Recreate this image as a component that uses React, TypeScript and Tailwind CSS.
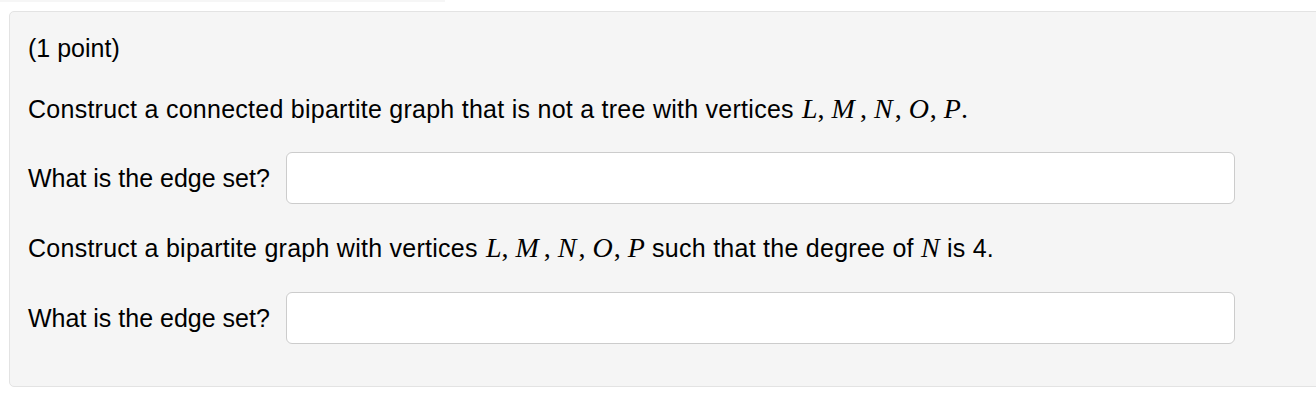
import React from "react";

const serif = { fontFamily: '"Liberation Serif", "DejaVu Serif", serif' };

const M = ({ children }: { children: React.ReactNode }) => (
  <span className="italic text-[28px] tracking-normal" style={serif}>
    {children}
  </span>
);

const Comma = ({ extra = "" }: { extra?: string }) => (
  <span className={"text-[28px] mr-[7px] tracking-normal " + extra} style={serif}>,</span>
);

const Verts = () => (
  <span className="whitespace-nowrap ml-[1px]">
    <M>L</M><Comma /><M>M</M><Comma extra="ml-[5px]" /><M>N</M><Comma extra="ml-[2px]" /><M>O</M><Comma extra="ml-[1px]" /><M>P</M>
  </span>
);

export default function App() {
  return (
    <div className="w-[1316px] h-[406px] overflow-hidden bg-white text-black" style={{ fontFamily: '"Liberation Sans", Arial, sans-serif' }}>
      <div className="h-[2px] w-[445px] bg-[#f6f6f6]" />
      <div className="mt-[9px] ml-[9px] w-[1330px] rounded-[5px] border border-[#e3e3e3] bg-[#f5f5f5] pt-[18px] pl-[18px] pb-[42px] text-[25px] leading-[36px]">
        <p>(1 point)</p>
        <p className="mt-[25px] tracking-[0.26px]">
          Construct a connected bipartite graph that is not a tree with vertices <Verts />
          <span className="text-[28px]" style={serif}>.</span>
        </p>
        <div className="mt-[25px] flex items-center gap-[16px]">
          <span>What is the edge set?</span>
          <div className="h-[52px] w-[949px] rounded-[6px] border border-[#cccccc] bg-white" />
        </div>
        <p className="mt-[26px] tracking-[0.26px]">
          Construct a bipartite graph with vertices <Verts /> such that the degree of <M>N</M> is 4.
        </p>
        <div className="mt-[26px] flex items-center gap-[16px]">
          <span>What is the edge set?</span>
          <div className="h-[52px] w-[949px] rounded-[6px] border border-[#cccccc] bg-white" />
        </div>
      </div>
    </div>
  );
}
